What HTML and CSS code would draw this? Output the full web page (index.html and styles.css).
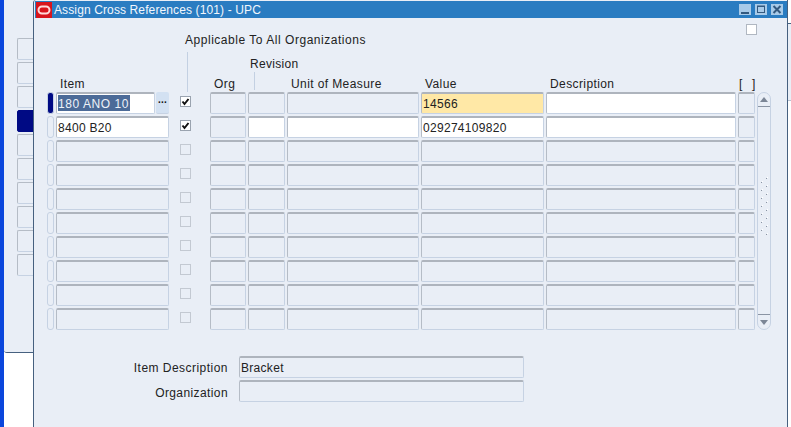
FILE: index.html
```html
<!DOCTYPE html>
<html lang="en">
<head>
<meta charset="utf-8">
<title>Assign Cross References (101) - UPC</title>
<link rel="stylesheet" href="styles.css">
</head>
<body>
<div class="desktop">
  <div class="taskstrip"></div>
  <div class="bgwin">
    <div class="bgcell"></div><div class="bgcell"></div><div class="bgcell"></div><div class="bgcell bgcell-current"></div><div class="bgcell"></div>
    <div class="bgcell"></div><div class="bgcell"></div><div class="bgcell"></div><div class="bgcell"></div><div class="bgcell"></div>
  </div>
  <div class="edge"></div>

  <div class="win">
    <div class="titlebar">
      <svg class="logo" width="16" height="16" viewBox="0 0 16 16"><rect width="16" height="16" fill="#d8141c"/><rect x="2.5" y="4.5" width="11" height="7" rx="3.5" fill="none" stroke="#ffd9d9" stroke-width="2"/></svg>
      <span class="title">Assign Cross References (101) - UPC</span>
      <div class="winbtns">
        <svg class="winbtn" width="12" height="11" viewBox="0 0 12 11"><rect width="12" height="11" fill="#a8cae8"/><rect x="2" y="8" width="8" height="2" fill="#33597f"/></svg>
        <svg class="winbtn" width="12" height="11" viewBox="0 0 12 11"><rect width="12" height="11" fill="#a8cae8"/><rect x="2.5" y="2.5" width="7" height="6" fill="none" stroke="#33597f"/><rect x="2" y="1.5" width="8" height="1.5" fill="#33597f"/></svg>
        <svg class="winbtn winbtn-close" width="12" height="11" viewBox="0 0 12 11"><rect width="12" height="11" fill="#a8cae8"/><path d="M2.5 2 9.5 9M9.5 2 2.5 9" stroke="#33597f" stroke-width="2"/></svg>
      </div>
    </div>

    <div class="head">
      <span class="lbl lbl-applicable">Applicable To All Organizations</span>
      <span class="topcheck"></span>
      <span class="tick tick-applicable"></span>
      <span class="lbl lbl-revision">Revision</span>
      <span class="tick tick-revision"></span>
      <span class="lbl col-item">Item</span>
      <span class="lbl col-org">Org</span>
      <span class="lbl col-uom">Unit of Measure</span>
      <span class="lbl col-value">Value</span>
      <span class="lbl col-desc">Description</span>
      <span class="lbl col-extra">[ &nbsp;]</span>
    </div>

    <div class="table">
      <span class="mark mark-current"></span>
      <div class="itemcell"><span class="f f-white f-item"><span class="sel">180 ANO 10</span></span><span class="lov">&middot;&middot;&middot;</span></div>
      <span class="checkcell"><svg class="cb" width="11" height="11" viewBox="0 0 11 11"><rect x=".5" y=".5" width="10" height="10" fill="#fff" stroke="#9aa3af"/><path d="M2.5 5.5 4.5 8 8.5 3" fill="none" stroke="#111" stroke-width="2"/></svg></span>
      <span class="f"></span><span class="f"></span><span class="f"></span><span class="f f-yellow">14566</span><span class="f f-white"></span><span class="f"></span>
      <div class="scroll">
        <div class="sbtn sbtn-up"><svg width="8" height="5" viewBox="0 0 8 5"><path d="M4 0 8 5H0Z" fill="#7c8696"/></svg></div>
        <svg class="grip" width="10" height="60" viewBox="0 0 10 60"><g fill="none" stroke-width="1"><path stroke="#8a94a3" d="M6 2 7 1M6 10 7 9M6 18 7 17M6 26 7 25M6 34 7 33M6 42 7 41M6 50 7 49M6 58 7 57M1 6 2 5M1 14 2 13M1 22 2 21M1 30 2 29M1 38 2 37M1 46 2 45M1 54 2 53"/><path stroke="#fff" d="M7 1 8 0M7 9 8 8M7 17 8 16M7 25 8 24M7 33 8 32M7 41 8 40M7 49 8 48M7 57 8 56M2 5 3 4M2 13 3 12M2 21 3 20M2 29 3 28M2 37 3 36M2 45 3 44M2 53 3 52"/></g></svg>
        <div class="sbtn sbtn-down"><svg width="8" height="5" viewBox="0 0 8 5"><path d="M0 0H8L4 5Z" fill="#7c8696"/></svg></div>
      </div>

      <span class="mark"></span><span class="f f-white">8400 B20</span>
      <span class="checkcell"><svg class="cb" width="11" height="11" viewBox="0 0 11 11"><rect x=".5" y=".5" width="10" height="10" fill="#fff" stroke="#9aa3af"/><path d="M2.5 5.5 4.5 8 8.5 3" fill="none" stroke="#111" stroke-width="2"/></svg></span>
      <span class="f"></span><span class="f f-white"></span><span class="f f-white"></span><span class="f f-white">029274109820</span><span class="f f-white"></span><span class="f"></span>

      <span class="mark"></span><span class="f"></span><span class="checkcell"><span class="cb-off"></span></span><span class="f"></span><span class="f"></span><span class="f"></span><span class="f"></span><span class="f"></span><span class="f"></span>
      <span class="mark"></span><span class="f"></span><span class="checkcell"><span class="cb-off"></span></span><span class="f"></span><span class="f"></span><span class="f"></span><span class="f"></span><span class="f"></span><span class="f"></span>
      <span class="mark"></span><span class="f"></span><span class="checkcell"><span class="cb-off"></span></span><span class="f"></span><span class="f"></span><span class="f"></span><span class="f"></span><span class="f"></span><span class="f"></span>
      <span class="mark"></span><span class="f"></span><span class="checkcell"><span class="cb-off"></span></span><span class="f"></span><span class="f"></span><span class="f"></span><span class="f"></span><span class="f"></span><span class="f"></span>
      <span class="mark"></span><span class="f"></span><span class="checkcell"><span class="cb-off"></span></span><span class="f"></span><span class="f"></span><span class="f"></span><span class="f"></span><span class="f"></span><span class="f"></span>
      <span class="mark"></span><span class="f"></span><span class="checkcell"><span class="cb-off"></span></span><span class="f"></span><span class="f"></span><span class="f"></span><span class="f"></span><span class="f"></span><span class="f"></span>
      <span class="mark"></span><span class="f"></span><span class="checkcell"><span class="cb-off"></span></span><span class="f"></span><span class="f"></span><span class="f"></span><span class="f"></span><span class="f"></span><span class="f"></span>
      <span class="mark"></span><span class="f"></span><span class="checkcell"><span class="cb-off"></span></span><span class="f"></span><span class="f"></span><span class="f"></span><span class="f"></span><span class="f"></span><span class="f"></span>
    </div>

    <div class="details">
      <span class="lbl details-lbl details-lbl-item">Item Description</span><span class="f">Bracket</span>
      <span class="lbl details-lbl details-lbl-org">Organization</span><span class="f"></span>
    </div>
  </div>
</div>
</body>
</html>
```

FILE: styles.css
```css
* { box-sizing: border-box; }
html, body { margin: 0; padding: 0; }
body {
  width: 791px;
  height: 427px;
  overflow: hidden;
  background: #fff;
  font-family: "Liberation Sans", Arial, sans-serif;
  font-size: 12px;
  color: #222;
}
.desktop { position: relative; width: 791px; height: 427px; overflow: hidden; }

/* windows and screen pieces on the free desktop */
.taskstrip { position: absolute; left: 0; top: 0; width: 4px; height: 427px; background: #0b46dc; }
.bgwin {
  position: absolute; left: 4px; top: 0; width: 41px; height: 353px;
  background: #e9eef6;
  border-bottom: 1px solid #46607f;
  border-bottom-left-radius: 3px;
  padding: 38px 0 0 13px;
  display: flex; flex-direction: column; gap: 2px;
}
.bgcell {
  width: 28px; height: 22px; flex: none;
  background: #e9eef6;
  border: 1px solid #c6d2e3; border-top-color: #b5bcc6; border-left-color: #b5bcc6;
  border-radius: 2px;
}
.bgcell-current { background: #000a84; border-color: #000a84; }
.edge {
  position: absolute; left: 787px; top: 23px; width: 4px; height: 78px;
  background: #e9eef6;
  border-top: 1px solid #46607f; border-bottom: 1px solid #b8c2d0;
}
.win {
  position: absolute; left: 33px; top: 0; width: 755px; height: 427px;
  background: #e9eef6;
  border-left: 1px solid #46607f;
  border-right: 1px solid #46607f;
  border-top-left-radius: 3px;
  padding-top: 1px;
}

.titlebar {
  height: 17px; margin-left: 1px;
  background: #2a7cc1;
  display: flex; align-items: center;
  color: #f2f7fc;
}
.logo { flex: none; margin-left: 1px; }
.title { margin-left: 2px; letter-spacing: .12px; white-space: nowrap; }
.winbtns { margin-left: auto; margin-right: 4px; display: flex; gap: 4px; }
.winbtn { display: block; }

.lbl { white-space: nowrap; letter-spacing: .4px; line-height: 14px; }

.head, .table {
  display: grid;
  grid-template-columns: 7px 113px 37px 36px 37px 132px 123px 190px 17px 14px;
  column-gap: 2px;
  margin-left: 13px;
}
.head {
  grid-template-rows: 26px 24px 18px;
  padding-top: 6px;
  height: 74px;
}
.lbl-applicable { grid-column: 3; grid-row: 1; align-self: end; margin-left: 14px; margin-bottom: 3px; letter-spacing: .53px; }
.topcheck {
  grid-column: 9; grid-row: 1; justify-self: end; align-self: start;
  width: 11px; height: 11px; margin-right: -2px;
  background: #fff; border: 1px solid #b0b7c1;
}
.tick { border-left: 1px solid #c3d0e2; width: 1px; }
.tick-applicable { grid-column: 3; grid-row: 2 / 4; margin-left: 16px; margin-top: 2px; }
.lbl-revision { grid-column: 5; grid-row: 2; align-self: end; margin-left: 2px; margin-bottom: 3px; letter-spacing: .3px; }
.tick-revision { grid-column: 5; grid-row: 3; margin-left: 6px; margin-top: -2px; margin-bottom: 2px; }
.col-item, .col-org, .col-uom, .col-value, .col-desc, .col-extra { grid-row: 3; align-self: center; margin-left: 4px; padding-top: 2px; }
.col-item { grid-column: 2; }
.col-org { grid-column: 4; }
.col-uom { grid-column: 6; }
.col-value { grid-column: 7; }
.col-desc { grid-column: 8; }
.col-extra { grid-column: 9; margin-left: 1px; letter-spacing: 1px; }

.table {
  grid-template-rows: repeat(10, 22px);
  row-gap: 2px;
}

.f {
  display: block;
  height: 22px;
  min-width: 0;
  padding: 3px 0 0 1px;
  line-height: 15px;
  letter-spacing: .3px;
  white-space: nowrap;
  overflow: hidden;
  background: #e9eef6;
  border: 1px solid #c6d2e3;
  border-top: 2px solid #aeb4bd;
  border-left-color: #b5bcc6;
  border-radius: 2px;
}
.f-white { background: #fff; }
.f-yellow { background: #ffe8a6; }

.mark {
  height: 22px;
  background: #e9eef6;
  border: 1px solid #c6d2e3;
  border-radius: 3px;
}
.mark-current { background: #000a84; border-color: #c6d2e3; }

.itemcell { display: flex; gap: 1px; min-width: 0; }
.f-item { flex: 1; min-width: 0; }
.sel {
  display: block; width: fit-content;
  height: 16px; margin-top: -2px; padding: 2px 1px 0 0;
  background: #4c6b98; color: #eef2f8;
  letter-spacing: .55px;
}
.lov {
  flex: none; width: 13px; height: 22px;
  background: #d3e1f2;
  border-bottom: 1px solid #c6d2e3;
  border-radius: 2px;
  color: #111;
  font-weight: bold;
  font-size: 10px;
  line-height: 21px;
  letter-spacing: -.3px;
  text-align: center;
}

.checkcell { display: block; padding: 4px 0 0 9px; height: 22px; }
.cb { display: block; }
.cb-off { display: block; width: 11px; height: 11px; background: #e9eef6; border: 1px solid #c3c9d2; }

.scroll {
  grid-column: 10; grid-row: 1 / 11;
  border: 1px solid #c6d2e3;
  border-radius: 7px;
  display: flex; flex-direction: column;
  height: 238px;
}
.sbtn { flex: none; display: flex; align-items: center; justify-content: center; }
.sbtn-up { border-bottom: 1px solid #8a94a3; height: 14px; }
.sbtn-down { border-top: 1px solid #8a94a3; height: 15px; margin-top: auto; }
.grip { display: block; margin: 70px 0 0 2px; flex: none; }

.details {
  display: grid;
  grid-template-columns: 181px 285px;
  grid-template-rows: 22px 22px;
  column-gap: 11px;
  row-gap: 2px;
  margin: 26px 0 0 13px;
}
.details-lbl { text-align: right; align-self: center; }
.details-lbl-item { padding-top: 2px; letter-spacing: .47px; }
.details-lbl-org { padding-top: 4px; }
```
